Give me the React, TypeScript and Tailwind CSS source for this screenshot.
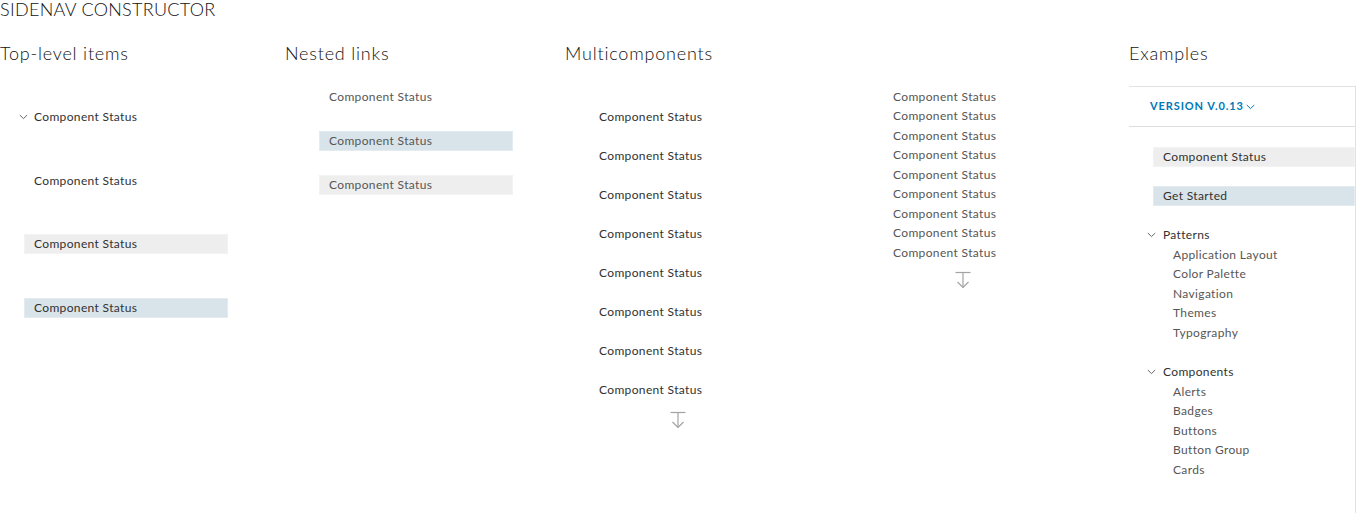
import React from "react";

const Chevron = ({ className = "" }: { className?: string }) => (
  <svg width="9" height="6" viewBox="0 0 9 6" className={className}>
    <path d="M0.8 1 L4.5 4.6 L8.2 1" fill="none" stroke="currentColor" strokeWidth="1" />
  </svg>
);

const ArrowDown = () => (
  <svg width="18" height="18" viewBox="0 0 18 18" className="text-[#a3a3a3]">
    <path d="M1.5 1.5 H16.5" stroke="currentColor" strokeWidth="1.2" fill="none" />
    <path d="M9 1.5 V16.5" stroke="currentColor" strokeWidth="1.2" fill="none" />
    <path d="M3.5 11 L9 16.5 L14.5 11" stroke="currentColor" strokeWidth="1.2" fill="none" />
  </svg>
);

const Box = ({ children, tone, className = "" }: { children: React.ReactNode; tone: "grey" | "blue"; className?: string }) => (
  <div
    className={
      "h-[20px] flex items-center pl-[9px] border " +
      (tone === "grey" ? "bg-[#eeeeee] border-[#f3f3f3] " : "bg-[#d9e4ea] border-[#e3ecf0] ") +
      className
    }
  >
    {children}
  </div>
);

const H = ({ children }: { children: React.ReactNode }) => (
  <div className="h-[24px] leading-[24px] text-[18px] font-light text-[#111] tracking-[0.8px]">{children}</div>
);

export default function App() {
  const multi = Array.from({ length: 8 });
  const multi2 = Array.from({ length: 9 });
  return (
    <div className="w-[1358px] h-[513px] bg-white overflow-hidden text-[#313131] font-['Lato','Liberation_Sans',sans-serif]">
      <div className="h-[19px] text-[18px] leading-[19px] font-light text-[#111] tracking-[0.3px]">SIDENAV CONSTRUCTOR</div>
      <div className="flex mt-[22px] text-[12px] tracking-[0.35px]">
        {/* Column 1 */}
        <div className="w-[285px] shrink-0">
          <H>Top-level items</H>
          <div className="mt-[42px] flex flex-col gap-[43.5px]">
            <div className="h-[20px] flex items-center pl-[19px] gap-[6px]">
              <Chevron className="text-[#666]" />
              <span>Component Status</span>
            </div>
            <div className="h-[20px] flex items-center pl-[34px]">Component Status</div>
            <Box tone="grey" className="ml-[24px] w-[204px]">Component Status</Box>
            <Box tone="blue" className="ml-[24px] w-[204px]">Component Status</Box>
          </div>
        </div>
        {/* Column 2 */}
        <div className="w-[280px] shrink-0">
          <H>Nested links</H>
          <div className="mt-[22px] flex flex-col gap-[24px] text-[#565656]">
            <div className="h-[20px] flex items-center pl-[44px]">Component Status</div>
            <Box tone="blue" className="ml-[34px] w-[194px]">Component Status</Box>
            <Box tone="grey" className="ml-[34px] w-[194px]">Component Status</Box>
          </div>
        </div>
        {/* Column 3 */}
        <div className="w-[564px] shrink-0">
          <H>Multicomponents</H>
          <div className="flex">
            <div className="w-[328px] shrink-0 pl-[34px] mt-[42px]">
              <div className="flex flex-col gap-[19px]">
                {multi.map((_, i) => (
                  <div key={i} className="h-[20px] flex items-center">Component Status</div>
                ))}
              </div>
              <div className="ml-[70px] mt-[11px]">
                <ArrowDown />
              </div>
            </div>
            <div className="mt-[22px]">
              <div className="flex flex-col text-[#565656]">
                {multi2.map((_, i) => (
                  <div key={i} className="h-[19.5px] flex items-center">Component Status</div>
                ))}
              </div>
              <div className="ml-[61px] mt-[8px]">
                <ArrowDown />
              </div>
            </div>
          </div>
        </div>
        {/* Column 4 */}
        <div className="w-[227px] shrink-0">
          <H>Examples</H>
          <div className="mt-[21px] border-t border-r border-[#e2e2e2] h-[460px]">
            <div className="h-[40px] border-b border-[#dedede] flex items-center pl-[21px] gap-[2px] text-[#0079b8]">
              <span className="text-[11px] font-bold tracking-[0.9px]">VERSION V.0.13</span>
              <Chevron className="text-[#0079b8]" />
            </div>
            <div className="mt-[20px] flex flex-col">
              <Box tone="grey" className="ml-[24px]">Component Status</Box>
              <Box tone="blue" className="ml-[24px] mt-[19px]">Get Started</Box>
              <div className="mt-[19px] h-[20px] flex items-center pl-[18px] gap-[7px]">
                <Chevron className="text-[#666]" />
                <span>Patterns</span>
              </div>
              <div className="flex flex-col pl-[44px] text-[#565656]">
                {["Application Layout", "Color Palette", "Navigation", "Themes", "Typography"].map((t) => (
                  <div key={t} className="h-[19.5px] flex items-center">{t}</div>
                ))}
              </div>
              <div className="mt-[19.5px] h-[20px] flex items-center pl-[18px] gap-[7px]">
                <Chevron className="text-[#666]" />
                <span>Components</span>
              </div>
              <div className="flex flex-col pl-[44px] text-[#565656]">
                {["Alerts", "Badges", "Buttons", "Button Group", "Cards"].map((t) => (
                  <div key={t} className="h-[19.5px] flex items-center">{t}</div>
                ))}
              </div>
            </div>
          </div>
        </div>
      </div>
    </div>
  );
}
